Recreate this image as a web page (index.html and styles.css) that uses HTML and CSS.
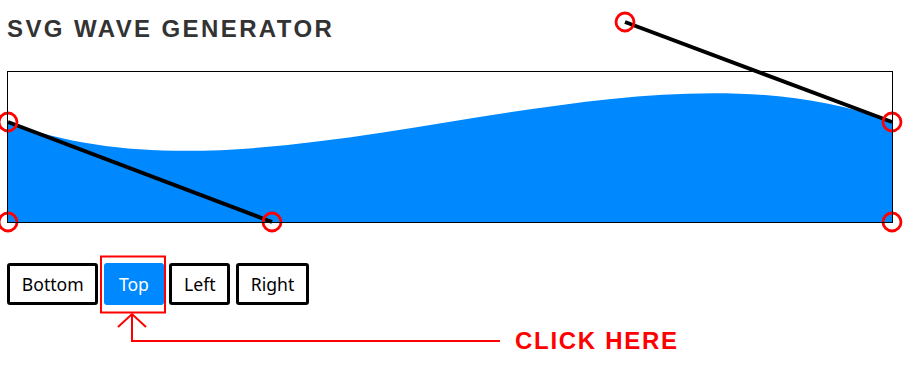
FILE: index.html
```html
<!DOCTYPE html>
<html lang="en">
<head>
<meta charset="utf-8">
<title>SVG Wave Generator</title>
<link rel="stylesheet" href="styles.css">
</head>
<body>
<div class="page">
  <h1 class="title">SVG WAVE GENERATOR</h1>
  <div class="wave-wrap">
    <svg class="wave" width="884" height="150" viewBox="0 0 884 150">
      <path class="wave-fill" d="M0,50 C264,150 617,-50 884,50 L884,150 L0,150 Z"/>
      <line class="handle" x1="0" y1="50" x2="264" y2="150"/>
      <line class="handle" x1="884" y1="50" x2="617" y2="-50"/>
      <circle class="point" cx="0" cy="50" r="9"/>
      <circle class="point" cx="264" cy="150" r="9"/>
      <circle class="point" cx="617" cy="-50" r="9"/>
      <circle class="point" cx="884" cy="50" r="9"/>
      <circle class="point" cx="0" cy="150" r="9"/>
      <circle class="point" cx="884" cy="150" r="9"/>
    </svg>
  </div>
  <div class="buttons">
    <button class="btn">Bottom</button>
    <button class="btn active">Top</button>
    <button class="btn">Left</button>
    <button class="btn">Right</button>
  </div>
</div>
<svg class="annotation" width="914" height="366" viewBox="0 0 914 366">
  <rect class="anno-line" x="101" y="256.5" width="64" height="56"/>
  <polyline class="anno-line" points="500,341 132,341 132,314"/>
  <polyline class="anno-line" points="118,327 132,314 146,327"/>
  <text class="anno-text" x="515" y="349">CLICK HERE</text>
</svg>
</body>
</html>
```
FILE: styles.css
```css
html, body {
  margin: 0;
  padding: 0;
  background: #fff;
}
body {
  position: relative;
  width: 914px;
  height: 366px;
  overflow: hidden;
}
.page {
  padding: 15px 0 0 7px;
}
.title {
  margin: 0;
  font-family: "Liberation Sans", Arial, sans-serif;
  font-weight: bold;
  font-size: 24px;
  line-height: 28px;
  letter-spacing: 2.4px;
  color: #333;
}
.wave-wrap {
  margin: 29px 0 0 1px;
  width: 884px;
  height: 150px;
}
.wave {
  display: block;
  overflow: visible;
  outline: 1px solid #000;
}
.wave-fill {
  fill: #0088ff;
}
.handle {
  stroke: #000;
  stroke-width: 4;
}
.point {
  fill: none;
  stroke: #ff0000;
  stroke-width: 2.8;
}
.buttons {
  display: flex;
  gap: 5.6px;
  margin-top: 41px;
}
.btn {
  box-sizing: border-box;
  height: 42px;
  padding: 2px 11.8px 0;
  border: 3px solid #000;
  border-radius: 3px;
  background: #fff;
  color: #000;
  font-family: "Noto Sans", "Open Sans", sans-serif;
  font-size: 17.6px;
  line-height: 1;
  cursor: pointer;
}
.btn.active {
  background: #0088ff;
  border-color: #0088ff;
  color: #fff;
}
.annotation {
  position: absolute;
  left: 0;
  top: 0;
  pointer-events: none;
  overflow: visible;
}
.anno-line {
  fill: none;
  stroke: #ff0000;
  stroke-width: 2;
}
.anno-text {
  fill: #ff0000;
  font-family: "Liberation Sans", Arial, sans-serif;
  font-weight: bold;
  font-size: 24px;
  letter-spacing: 1.7px;
}
```
